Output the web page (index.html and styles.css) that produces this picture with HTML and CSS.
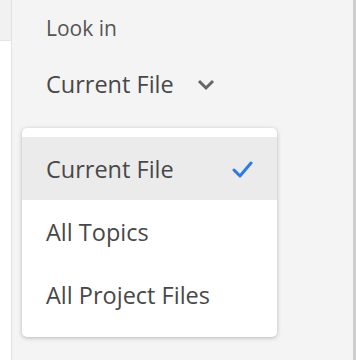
FILE: index.html
```html
<!DOCTYPE html>
<html lang="en">
<head>
  <meta charset="UTF-8" />
  <title>Look in</title>
  <link rel="stylesheet" href="styles.css">
</head>
<body>
  <div class="layout">
    <div class="side">
      <div class="side-top"></div>
    </div>
    <div class="panel">
      <div class="label">Look in</div>
      <div class="select">
        <span>Current File</span>
        <svg class="chevron" width="20" height="14" viewBox="0 0 20 14">
          <path d="M3 3 L10 10 L17 3" fill="none" stroke="#666" stroke-width="3" />
        </svg>
      </div>
      <ul class="menu">
        <li class="item selected">
          <span>Current File</span>
          <svg class="check" width="22" height="20" viewBox="0 0 22 20">
            <path d="M3 11 L9 17 L20 4" fill="none" stroke="#2f7ae5" stroke-width="3" stroke-linecap="round" stroke-linejoin="round" />
          </svg>
        </li>
        <li class="item">All Topics</li>
        <li class="item">All Project Files</li>
      </ul>
    </div>
  </div>
</body>
</html>
```

FILE: styles.css
```css
body {
  margin: 0;
  background-color: #fff;
  font-family: "Open Sans", Arial, sans-serif;
  color: #484848;
}
.layout {
  display: flex;
  height: 360px;
}
.side {
  width: 11px;
  border-right: 1px solid #e2e2e2;
  background-color: #fff;
}
.side-top {
  height: 40px;
  background-color: #f1f1f1;
  border-bottom: 1px solid #e6e6e6;
}
.panel {
  flex: 1;
  background-color: #f4f4f4;
  border-right: 3px solid #cdcdcd;
  padding: 13px 0 0 10px;
}
.label {
  font-size: 21px;
  color: #555;
  padding-left: 24px;
  line-height: 30px;
}
.select {
  display: flex;
  align-items: center;
  gap: 22px;
  padding-left: 24px;
  margin-top: 26px;
  font-size: 23.5px;
  line-height: 30px;
}
.chevron {
  margin-top: 2px;
}
.menu {
  list-style: none;
  margin: 29px 0 0 0;
  padding: 9px 0 11px 0;
  width: 255px;
  background-color: #fff;
  border-radius: 5px;
  box-shadow: 0 1px 4px rgba(0, 0, 0, 0.25);
}
.item {
  display: flex;
  align-items: center;
  justify-content: space-between;
  height: 63px;
  padding: 0 24px;
  font-size: 23.5px;
}
.selected {
  background-color: #ebebeb;
}
```
